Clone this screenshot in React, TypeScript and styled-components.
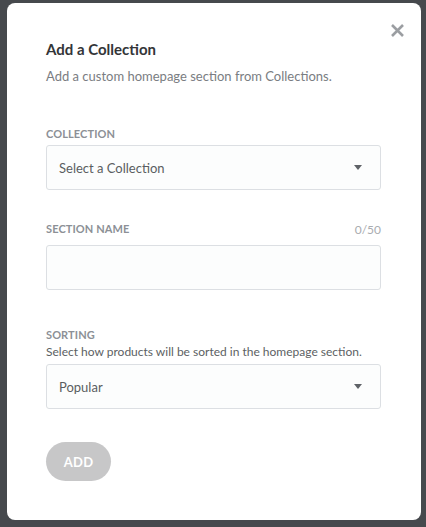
import React from "react";
import styled, { createGlobalStyle } from "styled-components";

const Global = createGlobalStyle`
  html, body { margin: 0; padding: 0; background: #46494d; }
  body { font-family: "Lato", "Open Sans", sans-serif; -webkit-font-smoothing: antialiased; }
  * { box-sizing: border-box; }
`;

const Backdrop = styled.div`
  width: 426px;
  height: 527px;
  padding: 3px 5px 7px 7px;
  background: #46494d;
  display: flex;
  overflow: hidden;
`;

const Modal = styled.div`
  position: relative;
  flex: 1;
  background: #ffffff;
  border-radius: 8px;
  padding: 36px 40px 0 39px;
  display: flex;
  flex-direction: column;
`;

const Close = styled.button`
  position: absolute;
  top: 19px;
  right: 16px;
  width: 16px;
  height: 16px;
  padding: 0;
  border: none;
  background: transparent;
  display: flex;
  align-items: center;
  justify-content: center;
`;

const Title = styled.h2`
  margin: 0;
  font-size: 15px;
  line-height: 20px;
  font-weight: 700;
  color: #333538;
`;

const Subtitle = styled.p`
  margin: 8px 0 0;
  font-size: 13px;
  line-height: 18px;
  color: #7a7d82;
`;

const Field = styled.div<{ $top: number }>`
  margin-top: ${(p) => p.$top}px;
  display: flex;
  flex-direction: column;
`;

const LabelRow = styled.div<{ $gap: number }>`
  display: flex;
  justify-content: space-between;
  align-items: center;
  height: 16px;
  margin-bottom: ${(p) => p.$gap}px;
`;

const Label = styled.label`
  font-size: 11px;
  line-height: 14px;
  font-weight: 700;
  letter-spacing: 0.1px;
  color: #8c9096;
  text-transform: uppercase;
`;

const Counter = styled.span`
  font-size: 12px;
  color: #a9acb0;
`;

const Help = styled.div`
  font-size: 12px;
  line-height: 16px;
  color: #5c5f63;
  margin-bottom: 4px;
`;

const Box = styled.div`
  height: 45px;
  border: 1px solid #dcdfe3;
  border-radius: 3px;
  background: #fcfdfd;
  display: flex;
  align-items: center;
  justify-content: space-between;
  padding: 0 18px 0 12px;
  font-size: 13px;
  color: #5a5d61;
`;

const Caret = styled.span`
  width: 0;
  height: 0;
  border-left: 4.5px solid transparent;
  border-right: 4.5px solid transparent;
  border-top: 5px solid #5f6267;
`;

const AddButton = styled.button`
  margin-top: 33px;
  align-self: flex-start;
  width: 65px;
  height: 39px;
  border: none;
  border-radius: 20px;
  background: #c7c7c8;
  color: #ffffff;
  font-family: inherit;
  font-size: 13px;
  font-weight: 700;
  letter-spacing: 0.3px;
`;

const Select = ({ value }: { value: string }) => (
  <Box>
    <span>{value}</span>
    <Caret />
  </Box>
);

export default function App() {
  return (
    <>
      <Global />
      <Backdrop>
        <Modal>
          <Close aria-label="Close">
            <svg width="15" height="15" viewBox="0 0 15 15">
              <path d="M2 2 L13 13 M13 2 L2 13" stroke="#9b9ea2" strokeWidth="2.6" strokeLinecap="butt" />
            </svg>
          </Close>
          <Title>Add a Collection</Title>
          <Subtitle>Add a custom homepage section from Collections.</Subtitle>

          <Field $top={41}>
            <LabelRow $gap={3}>
              <Label>Collection</Label>
            </LabelRow>
            <Select value="Select a Collection" />
          </Field>

          <Field $top={31}>
            <LabelRow $gap={8}>
              <Label>Section Name</Label>
              <Counter>0/50</Counter>
            </LabelRow>
            <Box />
          </Field>

          <Field $top={37}>
            <LabelRow $gap={1}>
              <Label>Sorting</Label>
            </LabelRow>
            <Help>Select how products will be sorted in the homepage section.</Help>
            <Select value="Popular" />
          </Field>

          <AddButton>ADD</AddButton>
        </Modal>
      </Backdrop>
    </>
  );
}
